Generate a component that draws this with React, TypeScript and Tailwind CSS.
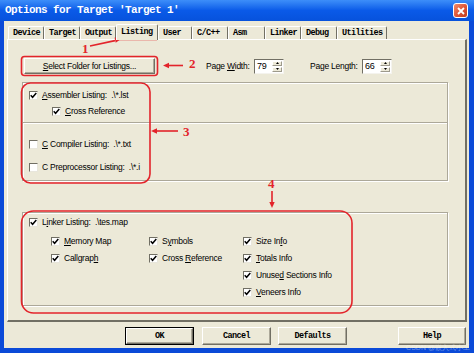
import React from "react";

const mono = "font-['Liberation_Mono','DejaVu_Sans_Mono',monospace]";

const Check = () => (
    <svg width="7" height="7" viewBox="0 0 7 7">
        <path d="M0.7 3.3 L2.6 5.3 L6.3 1.1" fill="none" stroke="#000" strokeWidth="1.5" />
    </svg>
);

const CheckBox = ({ checked }: { checked: boolean }) => (
    <span className="flex h-[9px] w-[9px] shrink-0 items-center justify-center border border-t-[#716f64] border-l-[#716f64] border-r-[#e8e6dc] border-b-[#e8e6dc] bg-white">
        {checked && <Check />}
    </span>
);

interface OptionProps {
    checked: boolean;
    className?: string;
    children: React.ReactNode;
}

const Option: React.FC<OptionProps> = ({ checked, className, children }) => (
    <div className={"flex items-center gap-[4px] " + (className ?? "")}>
        <CheckBox checked={checked} />
        <span className="whitespace-pre">{children}</span>
    </div>
);

const U = ({ children }: { children: React.ReactNode }) => <span className="underline underline-offset-1">{children}</span>;

const Spin = ({ value }: { value: string }) => (
    <div className="flex h-[15px] border border-t-[#716f64] border-l-[#716f64] border-r-[#f4f3ee] border-b-[#f4f3ee] bg-white">
        <div className="w-[17px] pl-[2px] text-[9px] leading-[13px]">{value}</div>
        <div className="flex w-[11px] flex-col gap-px py-px pr-px">
            <div className="flex flex-1 items-center justify-center border border-t-white border-l-white border-r-[#9d9a8c] border-b-[#9d9a8c] bg-[#ece9d8]">
                <svg width="3" height="2" viewBox="0 0 3 2"><path d="M1.5 0 L3 2 L0 2 Z" fill="#000" /></svg>
            </div>
            <div className="flex flex-1 items-center justify-center border border-t-white border-l-white border-r-[#9d9a8c] border-b-[#9d9a8c] bg-[#ece9d8]">
                <svg width="3" height="2" viewBox="0 0 3 2"><path d="M0 0 L3 0 L1.5 2 Z" fill="#000" /></svg>
            </div>
        </div>
    </div>
);

const tabs = [
    { label: "Device", w: "w-[36px]" },
    { label: "Target", w: "w-[36px]" },
    { label: "Output", w: "w-[36px]" },
    { label: "Listing", w: "w-[42px]", active: true },
    { label: "User", w: "w-[34px]" },
    { label: "C/C++", w: "w-[36px]" },
    { label: "Asm", w: "w-[37px]" },
    { label: "Linker", w: "w-[36px]" },
    { label: "Debug", w: "w-[36px]" },
    { label: "Utilities", w: "w-[50px]" },
];

const DlgButton = ({ label, def, w }: { label: string; def?: boolean; w: string }) => (
    <div className={w + " h-[18px] " + (def ? "border border-black" : "")}>
        <div className={"flex h-full items-center justify-center border border-t-white border-l-white border-r-[#716f64] border-b-[#716f64] bg-[#ece9d8] shadow-[inset_-1px_-1px_0_#aca899] text-[8.5px] font-bold tracking-[-0.6px] " + mono}>
            {label}
        </div>
    </div>
);

export default function App() {
    return (
        <div className="relative flex h-[353px] w-[474px] flex-col overflow-hidden bg-[#0b4ad8] font-['Liberation_Sans',Arial,sans-serif] text-[8.5px] tracking-[-0.25px] text-black">
            {/* title bar */}
            <div className="flex h-[21px] shrink-0 items-center bg-linear-to-b from-[#3d8ef9] via-[#0a5ae8] to-[#0752dc] pl-[5px] pr-[6px]">
                <div className={"text-[11px] font-bold tracking-[-0.6px] text-white " + mono}>
                    Options for Target 'Target 1'
                </div>
                <div className="ml-auto flex h-[15px] w-[15px] items-center justify-center rounded-[3px] border border-white bg-linear-to-br from-[#f08a6a] via-[#e0583a] to-[#c23c1c]">
                    <svg width="8" height="8" viewBox="0 0 8 8">
                        <path d="M1 1 L7 7 M7 1 L1 7" stroke="#fff" strokeWidth="1.8" />
                    </svg>
                </div>
            </div>

            {/* client */}
            <div className="mb-[5px] ml-[4px] mr-[5px] flex flex-1 flex-col bg-[#ece9d8]">
                <div className="flex h-[18px] items-end pl-[4px]">
                    {tabs.map((t) => (
                        <div
                            key={t.label}
                            className={
                                t.w +
                                " flex items-center rounded-t-[2px] border-l border-t border-r border-l-white border-t-white border-r-[#716f64] pl-[4px] text-[8.5px] font-bold tracking-[-0.6px] " +
                                mono +
                                (t.active ? " relative z-10 -mb-px h-[16px] bg-[#ece9d8]" : " h-[13px]")
                            }
                        >
                            {t.label}
                        </div>
                    ))}
                </div>

                {/* tab panel */}
                <div className="ml-[3px] flex h-[283px] w-[460px] flex-col border-l border-t border-r-2 border-b-2 border-l-white border-t-white border-r-[#716f64] border-b-[#716f64] pl-[14px]">
                    <div className="mt-[18px] flex h-[16px] items-center">
                        <div className="ml-[2px] flex h-[16px] w-[131px] items-center justify-center border border-t-white border-l-white border-r-[#716f64] border-b-[#716f64] shadow-[inset_-1px_-1px_0_#aca899]">
                            <span><U>S</U>elect Folder for Listings...</span>
                        </div>
                        <div className="ml-[51px] w-[48px] whitespace-nowrap">Page <U>W</U>idth:</div>
                        <Spin value="79" />
                        <div className="ml-[26px] w-[52px] whitespace-nowrap">Pa<U>g</U>e Length:</div>
                        <Spin value="66" />
                    </div>

                    {/* listing group */}
                    <div className="mt-[8px] flex h-[99px] w-[426px] flex-col border border-[#aca899] pt-[4px] shadow-[inset_1px_1px_0_#fff,1px_1px_0_#fff]">
                        <Option checked className="h-[16px] pl-[6px]"><U>A</U>ssembler Listing:  .\*.lst</Option>
                        <Option checked className="h-[16px] pl-[29px]"><U>C</U>ross Reference</Option>
                        <div className="mt-[3px] h-[2px] border-t border-b border-t-[#aca899] border-b-white" />
                        <Option checked={false} className="mt-[12px] h-[16px] pl-[6px]"><U>C</U> Compiler Listing:  .\*.txt</Option>
                        <Option checked={false} className="mt-[7px] h-[16px] pl-[6px]">C Preprocessor Listing:  .\*.i</Option>
                    </div>

                    {/* linker group */}
                    <div className="mt-[31px] flex h-[94px] w-[426px] flex-col border border-[#aca899] pt-px pl-[6px] shadow-[inset_1px_1px_0_#fff,1px_1px_0_#fff]">
                        <Option checked className="h-[16px]">L<U>i</U>nker Listing:  .\tes.map</Option>
                        <div className="mt-[3px] grid grid-cols-[98px_94px_1fr] auto-rows-[17px] pl-[22px]">
                            <Option checked><U>M</U>emory Map</Option>
                            <Option checked>S<U>y</U>mbols</Option>
                            <Option checked>Size In<U>f</U>o</Option>
                            <Option checked>Callgrap<U>h</U></Option>
                            <Option checked>Cross <U>R</U>eference</Option>
                            <Option checked><U>T</U>otals Info</Option>
                            <div />
                            <div />
                            <Option checked>Unuse<U>d</U> Sections Info</Option>
                            <div />
                            <div />
                            <Option checked><U>V</U>eneers Info</Option>
                        </div>
                    </div>
                </div>

                {/* dialog buttons */}
                <div className="mt-[5px] flex items-center pl-[121px]">
                    <DlgButton label="OK" def w="w-[69px]" />
                    <div className="ml-[8px]"><DlgButton label="Cancel" w="w-[69px]" /></div>
                    <div className="ml-[7px]"><DlgButton label="Defaults" w="w-[69px]" /></div>
                    <div className="ml-[51px]"><DlgButton label="Help" w="w-[68px]" /></div>
                </div>
            </div>

            {/* annotations */}
            <svg className="pointer-events-none absolute left-0 top-0" width="474" height="353" viewBox="0 0 474 353">
                <g fill="none" stroke="#e3242b" strokeWidth="1.6">
                    <line x1="117" y1="39.5" x2="157" y2="39.5" />
                    <line x1="90" y1="46" x2="115" y2="40.6" />
                    <rect x="21.5" y="56.5" width="136" height="19" rx="3" />
                    <line x1="183" y1="65.5" x2="168" y2="65.5" />
                    <rect x="21.5" y="83" width="128.5" height="100" rx="9" />
                    <line x1="178" y1="131" x2="157" y2="131" />
                    <line x1="272" y1="191" x2="272" y2="203" />
                    <rect x="21.5" y="211" width="330.5" height="102" rx="12" />
                </g>
                <g fill="#e3242b">
                    <polygon points="121,39 115.7,42.8 114.6,37.6" />
                    <polygon points="163,65.5 169,62.8 169,68.2" />
                    <polygon points="151,131 157,128.3 157,133.7" />
                    <polygon points="272,208 269.3,202 274.7,202" />
                </g>
                <g fill="#e3242b" fontFamily="'Liberation Serif', serif" fontWeight="bold" fontSize="13">
                    <text x="82" y="53">1</text>
                    <text x="189" y="68">2</text>
                    <text x="183" y="136">3</text>
                    <text x="268" y="188">4</text>
                </g>
            </svg>
            <div className="absolute bottom-0 right-[4px] text-[7px] tracking-normal text-white/40">CSDN @嵌入式小工</div>
        </div>
    );
}
